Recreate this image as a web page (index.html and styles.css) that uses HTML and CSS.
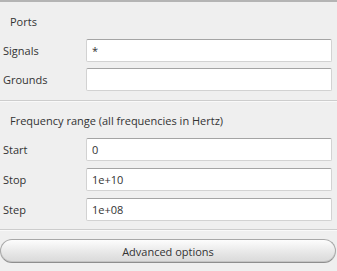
FILE: index.html
```html
<!DOCTYPE html>
<html lang="en">
<head>
    <meta charset="UTF-8">
    <title>Ports</title>
    <link rel="stylesheet" href="styles.css">
</head>
<body>
    <div class="panel">
        <div class="section ports">
            <h3>Ports</h3>
            <div class="rows">
                <div class="row">
                    <label for="signals">Signals</label>
                    <input type="text" id="signals" value="*">
                </div>
                <div class="row">
                    <label for="grounds">Grounds</label>
                    <input type="text" id="grounds" value="">
                </div>
            </div>
        </div>

        <div class="section freq">
            <h3>Frequency range (all frequencies in Hertz)</h3>
            <div class="rows">
                <div class="row">
                    <label for="start">Start</label>
                    <input type="text" id="start" value="0">
                </div>
                <div class="row">
                    <label for="stop">Stop</label>
                    <input type="text" id="stop" value="1e+10">
                </div>
                <div class="row">
                    <label for="step">Step</label>
                    <input type="text" id="step" value="1e+08">
                </div>
            </div>
        </div>

        <button class="advanced">Advanced options</button>
    </div>
</body>
</html>
```

FILE: styles.css
```css
body {
    margin: 0;
    background: #efefef;
    font-family: "Open Sans", "Noto Sans", sans-serif;
    font-size: 11px;
    color: #333;
}

.panel {
    border-top: 2px solid #b4b4b4;
    width: 337px;
    height: 269px;
    overflow: hidden;
}

.section {
    border-bottom: 1px solid #cdcdcd;
    box-shadow: 0 1px 0 #f9f9f9;
}

.ports {
    padding: 12px 5px 9px 3px;
}

.freq {
    padding: 12px 5px 8px 3px;
}

h3 {
    margin: 0 0 9px 7px;
    font-size: 11px;
    font-weight: normal;
    line-height: 16px;
}

.rows {
    display: flex;
    flex-direction: column;
    gap: 6px;
}

.freq .rows {
    gap: 7px;
}

.row {
    display: flex;
    align-items: center;
}

label {
    width: 83px;
    flex-shrink: 0;
}

input[type="text"] {
    flex: 1;
    min-width: 0;
    box-sizing: border-box;
    height: 23px;
    margin: 0;
    padding: 0 5px;
    background: #fff;
    border: 1px solid #d2d2d2;
    border-top-color: #a4a4a4;
    border-radius: 2px;
    font-family: inherit;
    font-size: 11px;
    color: #333;
    outline: none;
}

.advanced {
    display: block;
    box-sizing: border-box;
    width: 336px;
    height: 24px;
    margin: 9px 0 0 0;
    padding: 0;
    border: 1px solid #a8a8a8;
    border-bottom-color: #8e8e8e;
    border-radius: 12px;
    background: linear-gradient(#fdfdfd, #e6e6e6 60%, #d9d9d9);
    box-shadow: inset 0 -1px 0 #c4c4c4;
    font-family: inherit;
    font-size: 11px;
    color: #333;
}
```
